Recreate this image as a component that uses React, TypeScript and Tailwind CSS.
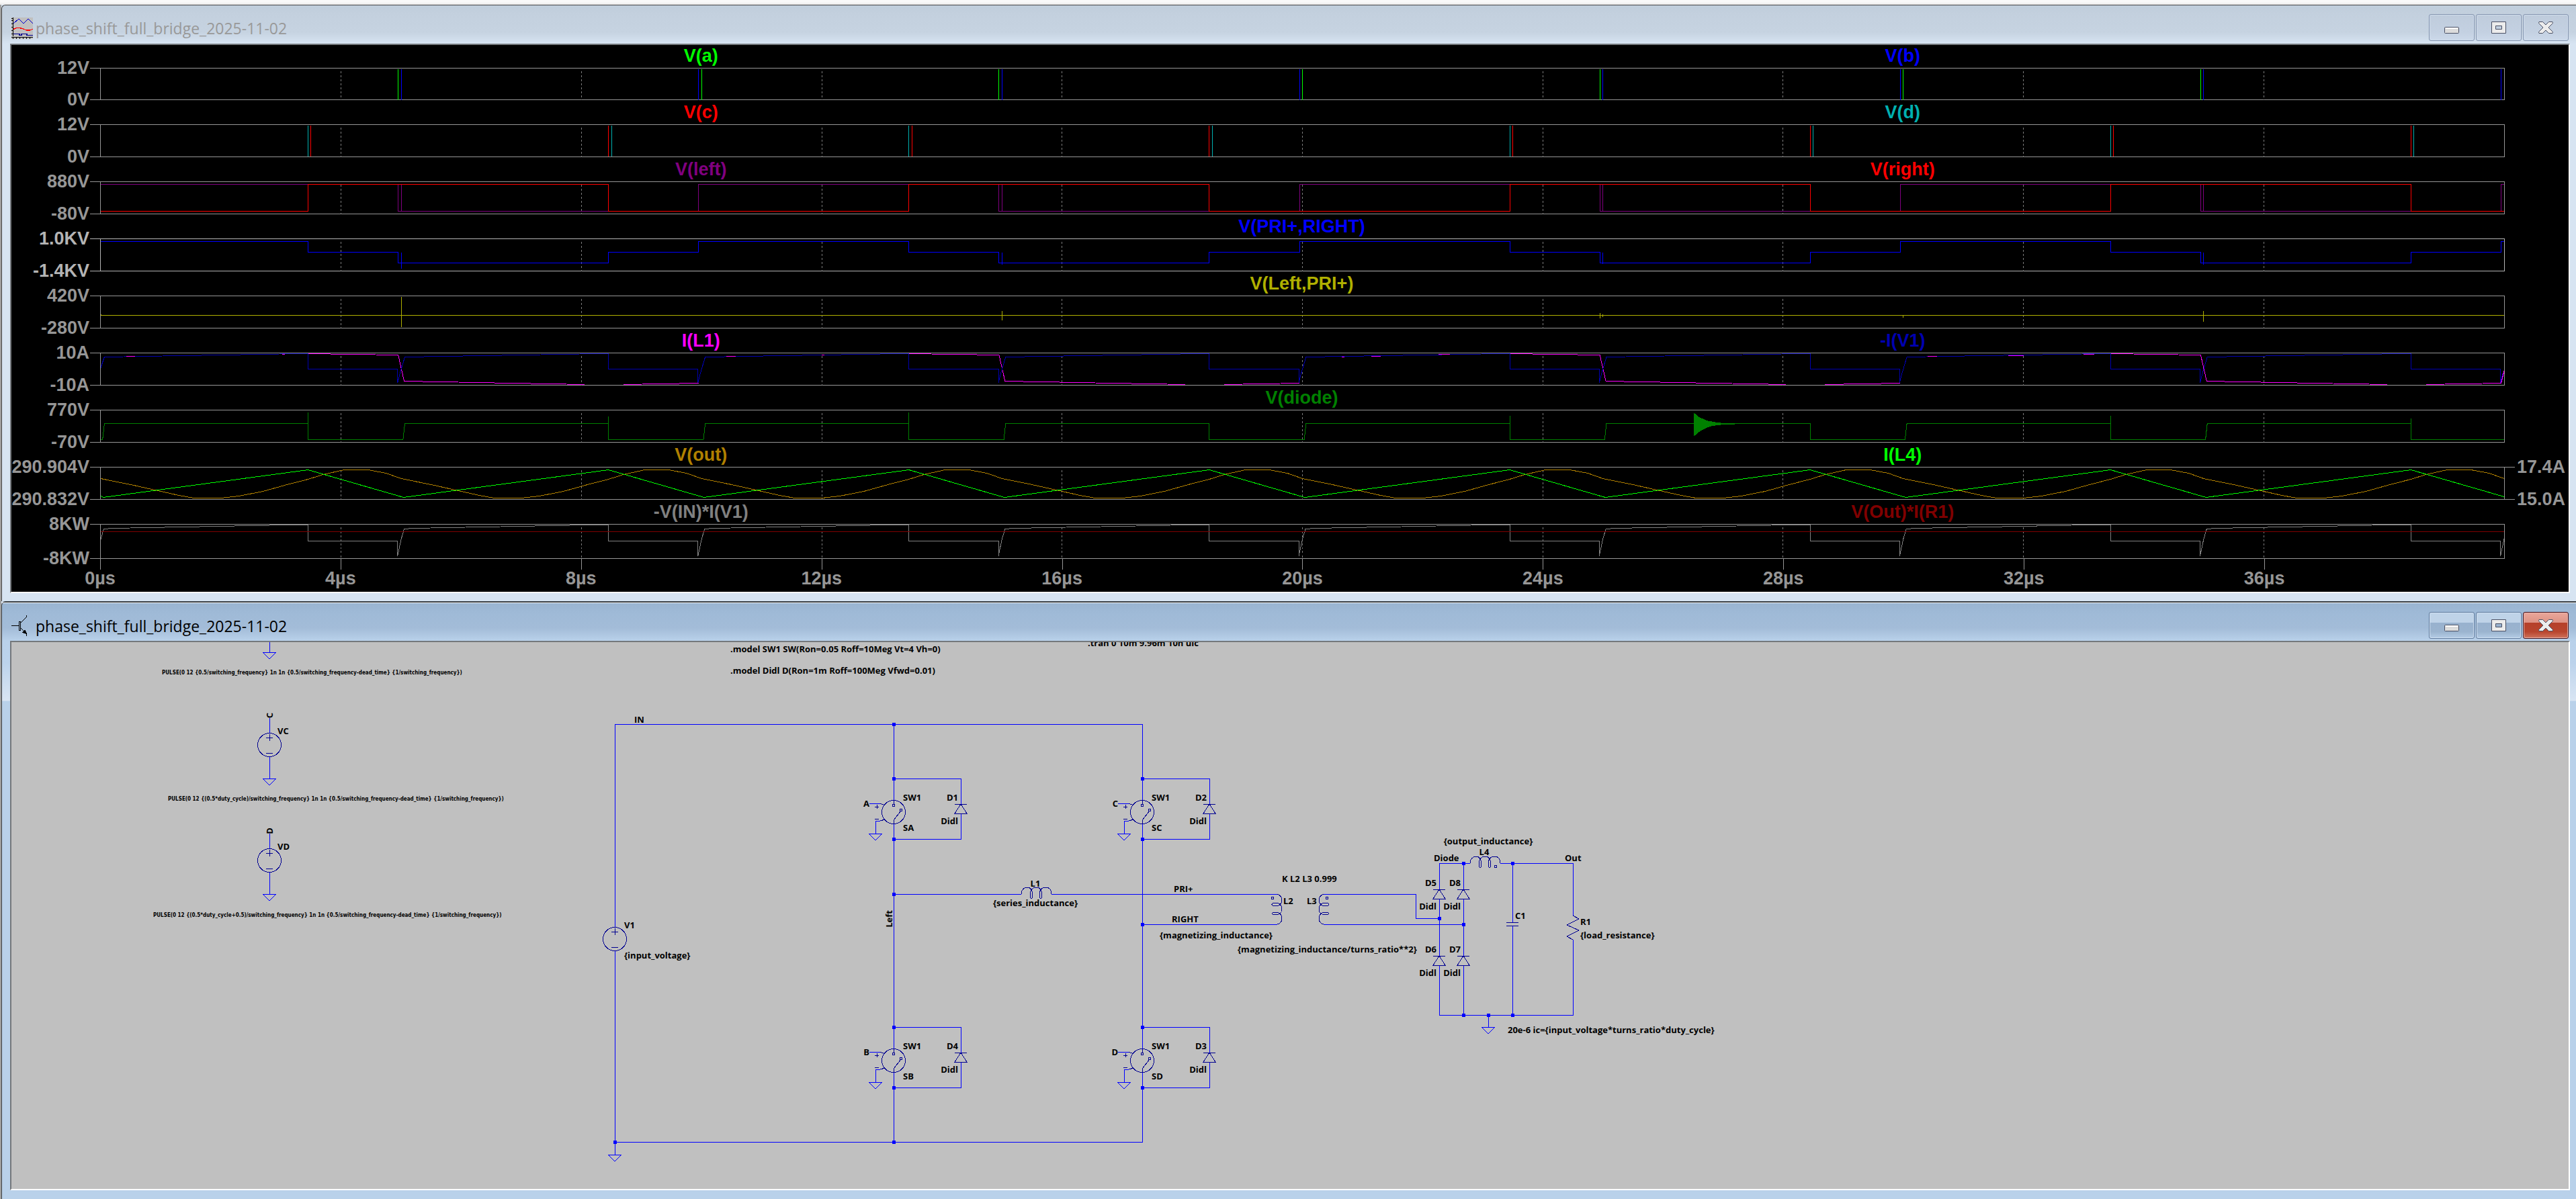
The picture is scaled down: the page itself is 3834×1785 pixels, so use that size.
import React from 'react';

interface Trace {
  color: string;
  d: string;
  fill?: boolean;
}

interface Pane {
  titles: { text: string; color: string }[];
  left: [string, string];
  right?: [string, string];
  traces: Trace[];
  height: number;
  active?: boolean;
}

const GRID_US = [4, 8, 12, 16, 20, 24, 28, 32, 36];
const TIME_LABELS = ['0µs', '4µs', '8µs', '12µs', '16µs', '20µs', '24µs', '28µs', '32µs', '36µs'];

// All trace paths use microseconds on x and pixels below the upper axis on y.
const verticals = (times: number[], y1 = 1, y2 = 47) => times.map(t => `M${t} ${y1}V${y2}`).join('');

const eachHalf = (fn: (t: number, i: number) => string) => Array.from({ length: 8 }, (_, i) => fn(i * 5, i)).join('');

const leftLeg = 'M0 4' + [0, 10, 20, 30].map(t => `H${t + 4.95}V44H${t + 5}V4V44H${t + 9.95}V4`).join('') + 'H40';
const rightLeg = 'M0 44' + [0, 10, 20, 30].map(t => `H${t + 3.45}V4H${t + 8.45}V44`).join('') + 'H40';
const SPIKES = [44, 38, 37, 38];
const primary = 'M0 4' + [0, 10, 20, 30].map((t, i) => `H${t + 3.45}V20H${t + 4.95}V36H${t + 5}V20V${SPIKES[i]}V36H${t + 8.45}V20H${t + 9.95}V4`).join('') + 'H40';

const supplyCurrent = 'M0 22' + eachHalf(t => `L${t + 0.06} 6L${t + 3.3} 1H${t + 3.45}V24H${t + 4.94}V44L${t + 4.98} 30`);
const seriesCurrent = [0, 10, 20, 30].map(t => `M${t + 3.45} 1L${t + 4.95} 3L${t + 5.05} 42L${t + 8.05} 47M${t + 8.7} 47L${t + 9.95} 45`).join('') + 'L40 27';
const seriesBits = 'M.42 5H.57M3.02 2H3.06M10.41 5H10.57M12 3H12.04M20.65 6H20.7M21.15 5H21.3M22.27 2H22.45M30.4 5H30.56M31.75 4H32M33 2H33.18';

const DIODE_PEAKS = [3, 9, 3, 20, 8, 20, 8, 12];
const diode = 'M0 44' + eachHalf((t, i) => `H${t + 0.03}L${t + 0.06} 20H${t + 3.45}V${DIODE_PEAKS[i]}V44`) + 'H40';
const ringing = 'M26.52 5L26.55 7L26.57 9L26.62 12L26.68 14L26.72 16L26.78 17L26.84 18L26.9 19L27.02 20L27.2 20.5L27.02 21L26.9 22L26.84 23L26.78 24L26.72 26L26.68 28L26.62 31L26.57 34L26.55 36L26.52 38Z';

const OUT_SHAPE = [[0.5, 26], [1, 36], [1.3, 42], [1.55, 46], [2, 46], [2.3, 43], [2.7, 36], [3.1, 26], [3.45, 18], [3.7, 11], [4.05, 4], [4.45, 4], [4.75, 9], [5, 17]];
const outVoltage = 'M0 17' + eachHalf(t => OUT_SHAPE.map(([x, y]) => `L${t + x} ${y}`).join(''));
const outCurrent = 'M0 43' + eachHalf(t => `L${t + 0.04} 45L${t + 3.45} 4${t < 35 ? '' : 'L40 44'}`);
const inPower = 'M0 22' + eachHalf(t => `L${t + 0.05} 7L${t + 0.2} 6L${t + 3.1} 1H${t + 3.45}V25H${t + 4.94}V47L${t + 5} 22`);

const PANES: Pane[] = [
  {
    titles: [{ text: 'V(a)', color: '#00ff00' }, { text: 'V(b)', color: '#0000ff' }],
    left: ['12V', '0V'],
    traces: [
      { color: '#00ff00', d: verticals([4.95, 10, 14.95, 20, 24.95, 30, 34.95]) },
      { color: '#0000ff', d: verticals([5, 9.95, 15, 19.95, 25, 29.95, 35, 39.95]) }
    ],
    height: 48
  },
  {
    titles: [{ text: 'V(c)', color: '#ff0000' }, { text: 'V(d)', color: '#00b0b0' }],
    left: ['12V', '0V'],
    traces: [
      { color: '#00b0b0', d: verticals([3.45, 8.5, 13.45, 18.5, 23.45, 28.5, 33.45, 38.5]) },
      { color: '#ff0000', d: verticals([3.5, 8.45, 13.5, 18.45, 23.5, 28.45, 33.5, 38.45]) }
    ],
    height: 49
  },
  {
    titles: [{ text: 'V(left)', color: '#800080' }, { text: 'V(right)', color: '#ff0000' }],
    left: ['880V', '-80V'],
    traces: [{ color: '#800080', d: leftLeg }, { color: '#ff0000', d: rightLeg }],
    height: 49
  },
  {
    titles: [{ text: 'V(PRI+,RIGHT)', color: '#0000ff' }],
    left: ['1.0KV', '-1.4KV'],
    traces: [{ color: '#0000ff', d: primary }],
    height: 49,
    active: true
  },
  {
    titles: [{ text: 'V(Left,PRI+)', color: '#b0b000' }],
    left: ['420V', '-280V'],
    traces: [{ color: '#b0b000', d: 'M0 27V29H40M5 1V46M15 22V36M24.95 25V33M25 27V31M30 28V32M35 22V38' }],
    height: 49
  },
  {
    titles: [{ text: 'I(L1)', color: '#ff00ff' }, { text: '-I(V1)', color: '#0000b0' }],
    left: ['10A', '-10A'],
    traces: [
      { color: '#ff00ff', d: seriesCurrent },
      { color: '#0000b0', d: supplyCurrent },
      { color: '#ff00ff', d: seriesBits }
    ],
    height: 49
  },
  {
    titles: [{ text: 'V(diode)', color: '#008000' }],
    left: ['770V', '-70V'],
    traces: [{ color: '#008000', d: diode }, { color: '#008000', d: ringing, fill: true }],
    height: 49
  },
  {
    titles: [{ text: 'V(out)', color: '#b08000' }, { text: 'I(L4)', color: '#00ff00' }],
    left: ['290.904V', '290.832V'],
    right: ['17.4A', '15.0A'],
    traces: [{ color: '#b08000', d: outVoltage }, { color: '#00ff00', d: outCurrent }],
    height: 49
  },
  {
    titles: [{ text: '-V(IN)*I(V1)', color: '#808080' }, { text: 'V(Out)*I(R1)', color: '#800000' }],
    left: ['8KW', '-8KW'],
    traces: [{ color: '#808080', d: inPower }, { color: '#800000', d: 'M0 11H40' }],
    height: 52
  }
];

const PlotPane: React.FC<{ pane: Pane }> = ({ pane }) => {
  const { height } = pane;
  const tone = pane.active ? 'text-[#b4b4b4] border-[#b4b4b4]' : 'text-[#969696] border-[#969696]';
  return (
    <section className="group">
      <header className="flex h-9 items-end pr-[97px] pb-1 pl-[132px] group-first:h-[34px]">
        {pane.titles.map(title => (
          <h3 key={title.text} className="flex-1 text-center" style={{ color: title.color }}>{title.text}</h3>
        ))}
      </header>
      <div className={`flex ${tone}`}>
        <div className="-my-[13px] flex w-[132px] shrink-0 flex-col justify-between border-inherit">
          {pane.left.map(label => (
            <div key={label} className="flex items-center justify-end gap-px border-inherit">
              <span>{label}</span><i className="w-[15px] shrink-0 border-t border-inherit" />
            </div>
          ))}
        </div>
        <div className="min-w-0 flex-1 border border-inherit" style={{ height }}>
          <svg viewBox={`0 0.5 40 ${height - 2}`} preserveAspectRatio="none" shapeRendering="crispEdges" className="block h-full w-full overflow-visible" fill="none">
            {GRID_US.map(us => (
              <path key={us} d={`M${us} 4V${height - 1}`} stroke="#7c7c7c" strokeDasharray="3 3" vectorEffect="non-scaling-stroke" />
            ))}
            {pane.traces.map((trace, i) => (
              <path key={i} d={trace.d} stroke={trace.color} fill={trace.fill ? trace.color : 'none'} vectorEffect="non-scaling-stroke" />
            ))}
          </svg>
        </div>
        <div className="-my-[13px] flex w-[95px] shrink-0 flex-col justify-between border-inherit">
          {pane.right?.map(label => (
            <div key={label} className="flex items-center gap-[3px] border-inherit">
              <i className="w-[15px] shrink-0 border-t border-inherit" /><span>{label}</span>
            </div>
          ))}
        </div>
      </div>
    </section>
  );
};

const Waveforms = () => (
  <div className="bg-black pb-1.5 font-['Liberation_Sans',Arial,sans-serif] text-[27px] leading-[27px] font-bold whitespace-nowrap">
    <div>
      {PANES.map(pane => <PlotPane key={pane.left.join() + pane.titles[0].text} pane={pane} />)}
    </div>
    <div className="grid grid-cols-10 pr-[95px] pl-[132px] text-[#969696]">
      {TIME_LABELS.map(label => (
        <div key={label}>
          <div className="h-4 border-l border-[#969696]" />
          <div className="w-fit -translate-x-1/2">{label}</div>
        </div>
      ))}
    </div>
  </div>
);

const WIRE = '#0000ff';
const SYMBOL = '#000090';

interface LabelProps {
  x: number;
  y: number;
  children: React.ReactNode;
  end?: boolean;
  middle?: boolean;
  small?: boolean;
  upright?: boolean;
}

// y is the middle of the capitals
const Label: React.FC<LabelProps> = ({ x, y, children, end, middle, small, upright }) => (
  <text
    x={x} y={y + (small ? 3 : 5)} fill="#000" textAnchor={end ? 'end' : middle ? 'middle' : 'start'}
    transform={upright ? `rotate(-90 ${x} ${y})` : undefined}
    className={small ? "font-['DejaVu_Sans_Condensed',sans-serif] text-[8px]" : 'text-[13px]'}
  >{children}</text>
);

const Node: React.FC<{ x: number; y: number }> = ({ x, y }) => <rect x={x - 2} y={y - 2} width="5" height="5" fill={WIRE} />;

const Ground: React.FC<{ x: number; y: number }> = ({ x, y }) => <path d={`M${x - 10} ${y}H${x + 10}L${x} ${y + 10}Z`} stroke={WIRE} />;

const Source: React.FC<{ x: number; y: number }> = ({ x, y }) => (
  <g stroke={SYMBOL}>
    <circle cx={x} cy={y} r="17.5" />
    <path d={`M${x - 5} ${y - 11}H${x + 5}M${x} ${y - 16}V${y - 6}M${x - 5} ${y + 12}H${x + 5}`} />
  </g>
);

const Diode: React.FC<{ x: number; y: number; name: string }> = ({ x, y, name }) => (
  <g>
    <path d={`M${x - 9} ${y}H${x + 9}M${x} ${y}L${x + 9} ${y + 14}H${x - 9}Z`} stroke={SYMBOL} />
    <Label x={x - 4} y={y - 10} end>{name}</Label>
    <Label x={x - 4} y={y + 25} end>Didl</Label>
  </g>
);

const SwitchCell: React.FC<{ x: number; y: number; pin: string; diode: string }> = ({ x, y, pin, diode }) => (
  <g>
    <path d={`M${x} ${y}H${x + 100}V${y + 38}M${x + 100} ${y + 52}V${y + 90}H${x}`} stroke={WIRE} />
    <path d={`M${x} ${y}V${y + 32}M${x} ${y + 68}V${y + 90}M${x - 36} ${y + 37}H${x - 20}M${x - 20} ${y + 63}H${x - 27}V${y + 82}`} stroke={WIRE} />
    <g stroke={SYMBOL}>
      <circle cx={x} cy={y + 50} r="17.5" />
      <path d={`M${x} ${y + 32}V${y + 38}M${x} ${y + 68}V${y + 62}L${x + 11} ${y + 48}`} />
      <circle cx={x} cy={y + 40} r="2" />
      <circle cx={x + 11} cy={y + 47} r="2" />
      <path d={`M${x - 20} ${y + 37}L${x - 13} ${y + 40}M${x - 20} ${y + 63}L${x - 13} ${y + 61}M${x - 28} ${y + 42}H${x - 22}M${x - 25} ${y + 39}V${y + 45}M${x - 28} ${y + 60}H${x - 22}`} />
    </g>
    <Ground x={x - 27} y={y + 82} />
    <Label x={x - 36} y={y + 37} end>{pin}</Label>
    <Label x={x + 14} y={y + 28}>SW1</Label>
    <Label x={x + 14} y={y + 73}>{'S' + pin}</Label>
    <Diode x={x + 100} y={y + 38} name={diode} />
    <Node x={x} y={y} />
    <Node x={x} y={y + 90} />
  </g>
);

const COIL = 'M0 0C0 -6 4 -10 9 -10C14 -10 17 -5 17 1C17 8 13 8 13 1C13 -6 17 -10 23 -10C28 -10 31 -5 31 1C31 8 27 8 27 1C27 -6 31 -10 36 -10C42 -10 45 -6 45 0';

const GateSource: React.FC<{ y: number; pin: string }> = ({ y, pin }) => (
  <g>
    <path d={`M401 ${y - 40}V${y - 18}M401 ${y + 18}V${y + 50}`} stroke={WIRE} />
    <Source x={401} y={y} />
    <Ground x={401} y={y + 50} />
    <Label x={401} y={y - 44} middle upright>{pin}</Label>
    <Label x={413} y={y - 21}>{'V' + pin}</Label>
  </g>
);

const Schematic = () => (
  <svg viewBox="17 956 3806 814" fill="none" shapeRendering="crispEdges" className="block w-full bg-[#c0c0c0] font-['Open_Sans','Noto_Sans',sans-serif] font-bold">
    <path d="M401 956V971" stroke={WIRE} />
    <Ground x={401} y={971} />
    <Label x={241} y={1001} small>{'PULSE(0 12 {0.5/switching_frequency} 1n 1n {0.5/switching_frequency-dead_time} {1/switching_frequency})'}</Label>
    <GateSource y={1109} pin="C" />
    <Label x={250} y={1189} small>{'PULSE(0 12 {(0.5*duty_cycle)/switching_frequency} 1n 1n {0.5/switching_frequency-dead_time} {1/switching_frequency})'}</Label>
    <GateSource y={1281} pin="D" />
    <Label x={228} y={1362} small>{'PULSE(0 12 {(0.5*duty_cycle+0.5)/switching_frequency} 1n 1n {0.5/switching_frequency-dead_time} {1/switching_frequency})'}</Label>

    <Label x={1087} y={966}>.model SW1 SW(Ron=0.05 Roff=10Meg Vt=4 Vh=0)</Label>
    <Label x={1087} y={998}>.model Didl D(Ron=1m Roff=100Meg Vfwd=0.01)</Label>
    <Label x={1619} y={957}>.tran 0 10m 9.96m 10n uic</Label>

    {/* input bus and the two bridge legs */}
    <path d="M915 1380V1078H1700V1159M915 1416V1719M915 1700H1700V1619M1330 1078V1159M1330 1249V1529M1330 1619V1700M1700 1249V1529" stroke={WIRE} />
    <Source x={915} y={1398} />
    <Ground x={915} y={1719} />
    <Label x={944} y={1071}>IN</Label>
    <Label x={929} y={1377}>V1</Label>
    <Label x={929} y={1422}>{'{input_voltage}'}</Label>
    <SwitchCell x={1330} y={1159} pin="A" diode="D1" />
    <SwitchCell x={1700} y={1159} pin="C" diode="D2" />
    <SwitchCell x={1330} y={1529} pin="B" diode="D4" />
    <SwitchCell x={1700} y={1529} pin="D" diode="D3" />
    <Node x={915} y={1700} />
    <Node x={1330} y={1078} />
    <Node x={1330} y={1331} />
    <Node x={1330} y={1700} />
    <Node x={1700} y={1376} />
    <Label x={1323} y={1368} middle upright>Left</Label>

    {/* series inductor and transformer */}
    <path d="M1330 1331H1520M1565 1331H1901M1700 1376H1901M1970 1331H2107V1367H2142M1970 1376H2178" stroke={WIRE} />
    <g stroke={SYMBOL}>
      <path d={COIL} transform="translate(1520 1331)" />
      <path d="M0 0C4 1 7 5 7 9C7 14 3 18 -2 18C-10 18 -10 13 -2 13C3 13 7 17 7 22C7 28 3 31 -2 31C-10 31 -10 27 -2 27C3 27 7 31 7 36C7 41 4 45 0 45" transform="translate(1901 1331)" />
      <path d="M0 0C-4 1 -7 5 -7 9C-7 14 -3 18 2 18C10 18 10 13 2 13C-3 13 -7 17 -7 22C-7 28 -3 31 2 31C10 31 10 27 2 27C-3 27 -7 31 -7 36C-7 41 -4 45 0 45" transform="translate(1970 1331)" />
      <path d={COIL} transform="translate(2188 1285)" />
      <circle cx="1894" cy="1337" r="2" />
      <circle cx="1975" cy="1337" r="2" />
      <circle cx="2226" cy="1290" r="2" />
    </g>
    <Label x={1541} y={1315} middle>L1</Label>
    <Label x={1541} y={1344} middle>{'{series_inductance}'}</Label>
    <Label x={1747} y={1323}>PRI+</Label>
    <Label x={1744} y={1368}>RIGHT</Label>
    <Label x={1726} y={1392}>{'{magnetizing_inductance}'}</Label>
    <Label x={1908} y={1308}>K L2 L3 0.999</Label>
    <Label x={1910} y={1341}>L2</Label>
    <Label x={1945} y={1341}>L3</Label>
    <Label x={1842} y={1413}>{'{magnetizing_inductance/turns_ratio**2}'}</Label>

    {/* rectifier and output filter */}
    <path d="M2188 1285H2142V1325M2142 1339V1424M2142 1438V1511H2341V1399M2178 1285V1325M2178 1339V1424M2178 1438V1511M2233 1285H2341V1363M2251 1285V1373M2251 1378V1511M2215 1511V1529" stroke={WIRE} />
    <path d="M2242 1373H2260M2242 1378H2260M2341 1363L2350 1368L2332 1377L2350 1385L2332 1394L2341 1399" stroke={SYMBOL} />
    <Diode x={2142} y={1324} name="D5" />
    <Diode x={2178} y={1324} name="D8" />
    <Diode x={2142} y={1423} name="D6" />
    <Diode x={2178} y={1423} name="D7" />
    <Node x={2142} y={1367} />
    <Node x={2178} y={1376} />
    <Node x={2178} y={1285} />
    <Node x={2251} y={1285} />
    <Node x={2178} y={1511} />
    <Node x={2215} y={1511} />
    <Node x={2251} y={1511} />
    <Ground x={2215} y={1529} />
    <Label x={2134} y={1277}>Diode</Label>
    <Label x={2215} y={1252} middle>{'{output_inductance}'}</Label>
    <Label x={2209} y={1268} middle>L4</Label>
    <Label x={2329} y={1277}>Out</Label>
    <Label x={2255} y={1363}>C1</Label>
    <Label x={2352} y={1372}>R1</Label>
    <Label x={2352} y={1392}>{'{load_resistance}'}</Label>
    <Label x={2244} y={1533}>{'20e-6 ic={input_voltage*turns_ratio*duty_cycle}'}</Label>
  </svg>
);

const PlotIcon = () => (
  <svg viewBox="0 0 32 32" className="size-8 shrink-0" fill="none" shapeRendering="crispEdges" aria-hidden="true">
    <rect width="32" height="32" fill="#c0c0c0" />
    <path d="M2.5 0V28M0 1H2M0 4.5H2M0 9.5H2M0 14.5H2M0 19.5H2M0 24.5H2" stroke="#000" />
    <path d="M0 29.5H32M2.5 29V32M7.5 29V32M12.5 29V32M17.5 29V32M22.5 29V32M27.5 29V32" stroke="#000" />
    <path d="M3 9L11 2L18 9L25 2L32 9" stroke="#0000d0" />
    <path d="M3 17H5L7 15.5H12L18 17L22 19H28L32 17" stroke="#f00" strokeWidth="1.3" />
    <path d="M3 24.5H12V26.5H15V24.5H23V26.5H32" stroke="#000090" strokeWidth="1.3" />
  </svg>
);

const TransistorIcon = () => (
  <svg viewBox="0 0 32 32" className="size-8 shrink-0" fill="none" stroke="#000" shapeRendering="crispEdges" aria-hidden="true">
    <path d="M0 15.5H12M11.5 9.5H13.5V22.5H11.5ZM14 11L22.5 2.5V0M14 19L22.5 27.5V31" />
    <path d="M22.5 27.5L17 25.5L20 22Z" fill="#000" />
  </svg>
);

const CaptionButtons: React.FC<{ active?: boolean }> = ({ active }) => {
  const base = 'flex h-10 w-[68px] items-center justify-center rounded-[3px] border inset-ring';
  const plain = active
    ? 'border-[#5f7a9c] inset-ring-[#cfe0f2] bg-[linear-gradient(#bfd3e8_0%,#bfd3e8_40%,#98b1ce_40%,#9bb4cf_75%,#b5cde6_100%)]'
    : 'border-[#8494ae] inset-ring-[#cfdcec] bg-[linear-gradient(#bfccdc,#c4d1e2_70%,#ccd9ea)]';
  const close = active
    ? 'border-[#43101a] inset-ring-[#e9b3a8] bg-[linear-gradient(#eaa79b_0%,#dd9284_40%,#b5402a_40%,#b8452e_75%,#d0735c_100%)]'
    : plain;
  return (
    <div className="flex gap-0.5 pt-[13px]">
      <button aria-label="Minimize" className={`${base} ${plain}`}>
        <svg viewBox="0 0 22 18" className="w-[22px]" stroke="#4a5064">
          <rect x=".5" y="8.5" width="21" height="9" rx="1" fill="#dcdcdc" /><path d="M2 10H20" stroke="#fff" strokeWidth="2" />
        </svg>
      </button>
      <button aria-label="Maximize" className={`${base} ${plain}`}>
        <svg viewBox="0 0 22 18" className="w-[22px]" stroke="#4a5064">
          <path d="M.5 .5H21.5V17.5H.5ZM6.5 6.5V11.5H15.5V6.5Z" fill="#ececec" fillRule="evenodd" />
        </svg>
      </button>
      <button aria-label="Close" className={`${base} ${close}`}>
        <svg viewBox="0 0 22 18" className="w-[22px]" stroke="#4a5064" strokeLinejoin="round">
          <path d="M1 .5H6.500L11 5L15.500 .5H21L21.500 2.500L15 9L21.500 15.500L21 17.500H15.500L11 13L6.500 17.500H1L.5 15.500L7 9L.5 2.500Z" fill="#ececec" />
        </svg>
      </button>
    </div>
  );
};

interface WindowProps {
  title: string;
  icon: React.ReactNode;
  active?: boolean;
  children: React.ReactNode;
}

const MdiWindow: React.FC<WindowProps> = ({ title, icon, active, children }) => {
  const frame = active
    ? 'border-t-2 border-[#3a3f44] pb-[13px] bg-[linear-gradient(#99b4d1_0px,#9fbad7_16px,#a3bcd8_38px,#b9d1ea_57px,#bcd3ec_90px,#d9e5f3_146px,#b9d1ea_147px)]'
    : 'border-t border-[#454545] pb-3 bg-[linear-gradient(#bfcddb_0px,#c3d0de_12px,#c6d3e1_40px,#d7e4f2_57px)]';
  return (
    <section className={`rounded-tl-md border-l ${frame}`}>
      {active && <div className="h-px bg-white/90" />}
      <header className={`flex items-start justify-between pr-[11px] pl-3.5 ${active ? 'h-14' : 'h-[57px]'}`}>
        <div className={`flex items-center gap-1 pt-[18px] font-['Open_Sans','Noto_Sans',sans-serif] text-[23px] leading-8 ${active ? 'text-black' : 'text-[#999]'}`}>
          {icon}
          <h2>{title}</h2>
        </div>
        <CaptionButtons active={active} />
      </header>
      <div className="mr-[9px] ml-3 border-2 border-t-[#74787c] border-r-white border-b-white border-l-[#74787c]">
        {children}
      </div>
    </section>
  );
};

export default function App() {
  return (
    <main className="min-h-screen bg-[#b9d1ea]">
      <div className="h-[7px] border-b-[3px] border-[#f0f0f0] bg-[#f9f9f9]" />
      <div className="border-l-2 border-[#a0a0a0] bg-[#d7e4f2]">
        <MdiWindow title="phase_shift_full_bridge_2025-11-02" icon={<PlotIcon />}>
          <Waveforms />
        </MdiWindow>
        <MdiWindow title="phase_shift_full_bridge_2025-11-02" icon={<TransistorIcon />} active>
          <Schematic />
        </MdiWindow>
      </div>
    </main>
  );
}
